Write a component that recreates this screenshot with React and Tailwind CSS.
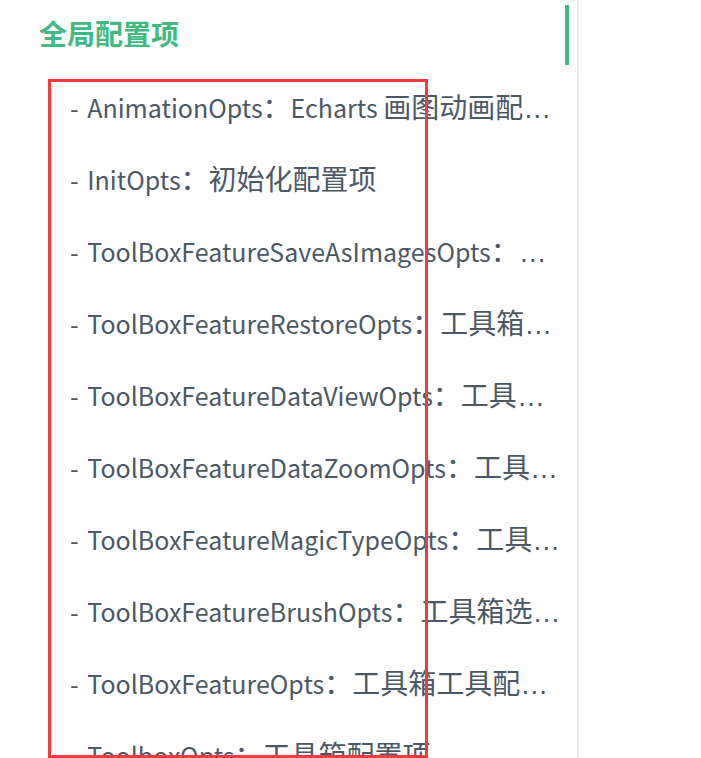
// visible text of each sidebar entry; `more` marks the ones cut off with an ellipsis
const items = [
  { text: 'AnimationOpts：Echarts 画图动画配', more: true },
  { text: 'InitOpts：初始化配置项' },
  { text: 'ToolBoxFeatureSaveAsImagesOpts：', more: true },
  { text: 'ToolBoxFeatureRestoreOpts：工具箱', more: true },
  { text: 'ToolBoxFeatureDataViewOpts：工具', more: true },
  { text: 'ToolBoxFeatureDataZoomOpts：工具', more: true },
  { text: 'ToolBoxFeatureMagicTypeOpts：工具', more: true },
  { text: 'ToolBoxFeatureBrushOpts：工具箱选', more: true },
  { text: 'ToolBoxFeatureOpts：工具箱工具配', more: true },
  { text: 'ToolboxOpts：工具箱配置项' },
];

// latin runs are set a touch smaller so they match the narrower latin face of the original
const Mixed = ({ text }) => {
  const parts = text.split(/([\u3000-\u9fff\uff00-\uffef]+)/).filter(Boolean);
  return parts.map((p, i) =>
    /[\u3000-\u9fff\uff00-\uffef]/.test(p) ? (
      <span key={i} className="text-[28px]">{p}</span>
    ) : (
      <span key={i} className="whitespace-pre text-[25px]">{p}</span>
    )
  );
};

const App = () => {
  return (
    <div
      className="relative flex h-[758px] w-[701px] overflow-hidden bg-white"
      style={{ fontFamily: '"Noto Sans CJK SC", "Noto Sans", sans-serif' }}
    >
      <div className="flex w-[579px] shrink-0 border-r-2 border-[#eaecef]">
        <div className="flex w-[565px] flex-col">
          <h2 className="mt-[12px] pl-[39px] text-[28px] font-bold leading-[42px] text-[#42b983]">
            全局配置项
          </h2>
          <ul className="mt-[16px] flex flex-col">
            {items.map((item) => (
              <li
                key={item.text}
                className="h-[72px] whitespace-nowrap pl-[70px] leading-[72px] text-[#4b5866]"
              >
                <span className="mr-[3px] whitespace-pre text-[25px]">- </span>
                <Mixed text={item.text} />
                {item.more && (
                  <span className="text-[28px] font-['Liberation_Sans',sans-serif]">…</span>
                )}
              </li>
            ))}
          </ul>
        </div>
        <div className="mt-[5px] h-[60px] w-[4px] bg-[#42b983]" />
      </div>
      <div className="flex-1" />

      {/* annotation box */}
      <div className="pointer-events-none absolute left-[48px] top-[79px] h-[679px] w-[380px] border-[3px] border-[#f03c3c]" />
    </div>
  );
};

export default App;
